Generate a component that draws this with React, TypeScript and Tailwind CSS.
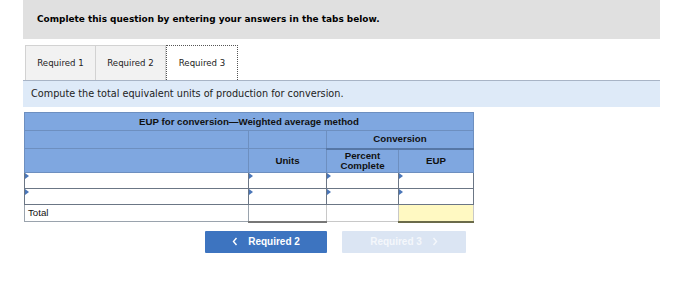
import React from 'react'

const verdana = { fontFamily: '"DejaVu Sans", Verdana, sans-serif' }

function Marker() {
  return (
    <span className="absolute left-0 top-0 h-0 w-0 border-l-[4px] border-t-[3px] border-b-[3px] border-l-[#4a76b8] border-t-transparent border-b-transparent" />
  )
}

function InputCell({ w }: { w: string }) {
  return (
    <td className={`relative h-[16px] ${w} border border-[#6b7685] bg-white p-0`}>
      <Marker />
    </td>
  )
}

function Chevron({ left }: { left?: boolean }) {
  return (
    <svg width="6" height="9" viewBox="0 0 6 9" fill="none" stroke="currentColor" strokeWidth="1.4">
      {left ? <path d="M4.5 1 1.5 4.5 4.5 8" /> : <path d="M1.5 1 4.5 4.5 1.5 8" />}
    </svg>
  )
}

export default function App() {
  return (
    <div className="h-[294px] w-[700px] bg-white">
      <div className="ml-[23px] w-[637px]">
        <div className="flex h-[39px] items-center bg-[#e0e0e0] pl-[14px]">
          <p className="text-[8.95px] font-bold text-black" style={verdana}>
            Complete this question by entering your answers in the tabs below.
          </p>
        </div>

        <div className="mt-[6px] flex h-[35px] pl-[2px] text-[8.6px] text-[#222]" style={verdana}>
          <div className="flex w-[71px] items-center justify-center border border-b-0 border-[#d2d2d2] bg-[#f2f2f2]">Required 1</div>
          <div className="flex w-[70px] items-center justify-center border border-b-0 border-l-0 border-[#d2d2d2] bg-[#f2f2f2]">Required 2</div>
          <div className="flex w-[72px] items-center justify-center border border-dotted border-b-0 border-[#555] bg-white">Required 3</div>
        </div>

        <div className="flex h-[27px] items-center border-t border-[#a8b4c6] bg-[#deeaf8] pl-[8px] text-[9.7px] text-[#222]" style={verdana}>
          Compute the total equivalent units of production for conversion.
        </div>
      </div>

      <div className="ml-[24px] mt-[5px]" style={{ fontFamily: '"Liberation Sans", Arial, sans-serif' }}>
        <table className="border-collapse text-[9.7px] leading-[10px] text-[#111]">
          <tbody>
            <tr className="h-[18px] bg-[#7fa7e0]">
              <td colSpan={4} className="border border-[#6d8fc0] text-center font-bold">
                EUP for conversion—Weighted average method
              </td>
            </tr>
            <tr className="h-[18px] bg-[#7fa7e0]">
              <td className="w-[224px] border border-[#6d8fc0]" />
              <td className="w-[78px] border border-[#6d8fc0]" />
              <td colSpan={2} className="border border-[#6d8fc0] border-b-[2px] border-b-[#5677a6] text-center font-bold">
                Conversion
              </td>
            </tr>
            <tr className="h-[24px] bg-[#7fa7e0] font-bold">
              <td className="border border-[#6d8fc0]" />
              <td className="border border-[#6d8fc0] text-center">Units</td>
              <td className="w-[72px] border border-[#6d8fc0] text-center">
                Percent
                <br />
                Complete
              </td>
              <td className="w-[75px] border border-[#6d8fc0] text-center">EUP</td>
            </tr>
            <tr>
              <InputCell w="w-[224px]" />
              <InputCell w="w-[78px]" />
              <InputCell w="w-[72px]" />
              <InputCell w="w-[75px]" />
            </tr>
            <tr>
              <InputCell w="w-[224px]" />
              <InputCell w="w-[78px]" />
              <InputCell w="w-[72px]" />
              <InputCell w="w-[75px]" />
            </tr>
            <tr className="h-[17px]">
              <td className="border border-[#9aa3ad] pl-[3px] text-left font-normal">Total</td>
              <td className="border border-[#c8c8c8] border-b-[2px] border-b-[#777]" />
              <td className="border border-[#c8c8c8]" />
              <td className="border border-[#c8c8c8] border-b-[2px] border-b-[#6b6b4a] bg-[#fff9c2]" />
            </tr>
          </tbody>
        </table>
      </div>

      <div className="ml-[205px] mt-[8px] flex gap-[15px]" style={{ fontFamily: '"Liberation Sans", Arial, sans-serif' }}>
        <div className="flex h-[22px] w-[122px] items-center justify-center gap-[10px] rounded-[1px] bg-[#3d74c0] text-[10px] font-bold text-white">
          <Chevron left />
          <span>Required 2</span>
        </div>
        <div className="flex h-[22px] w-[124px] items-center justify-center gap-[10px] rounded-[1px] bg-[#dbe5f3] text-[10px] font-bold text-[#f4f7fb]">
          <span>Required 3</span>
          <Chevron />
        </div>
      </div>
    </div>
  )
}
